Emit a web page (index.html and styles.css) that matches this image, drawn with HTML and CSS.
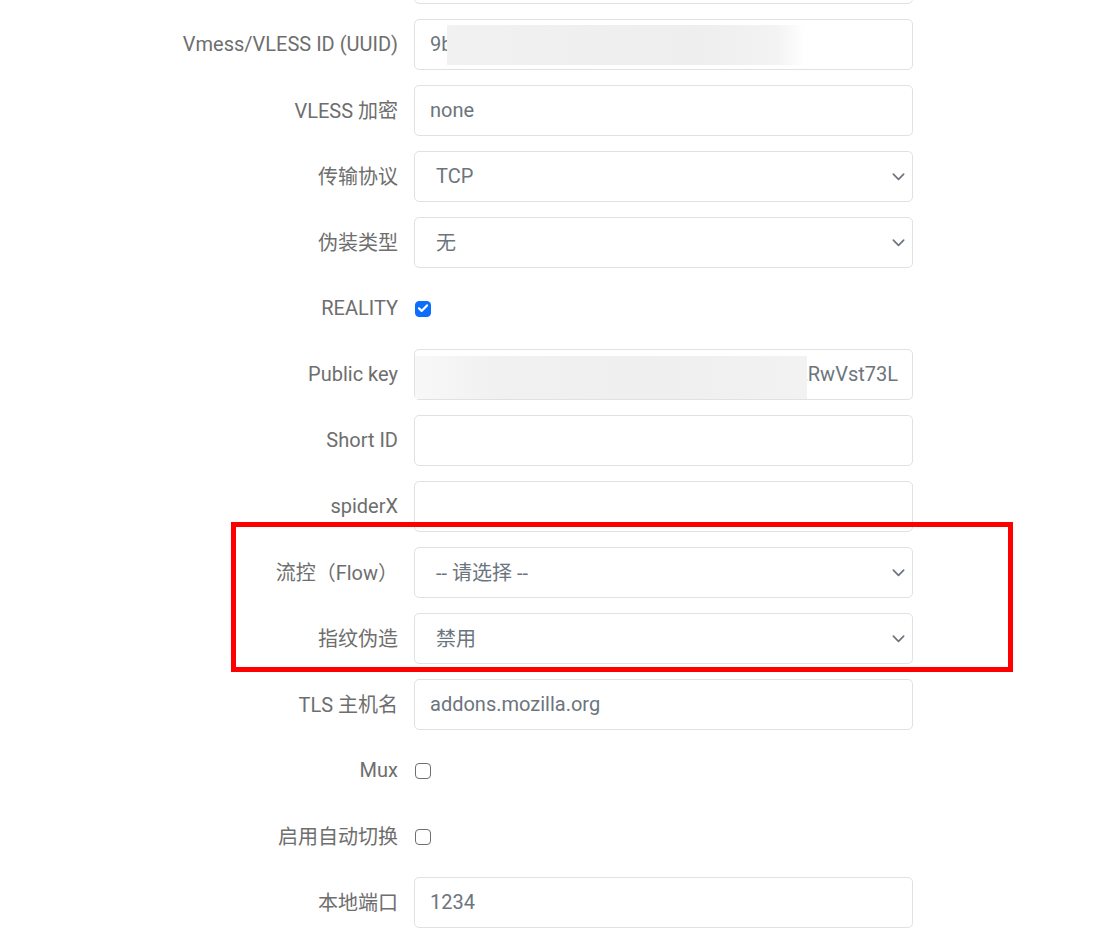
FILE: index.html
```html
<!DOCTYPE html>
<html lang="zh-CN">
<head>
<meta charset="utf-8">
<title>节点设置</title>
<link rel="stylesheet" href="styles.css">
</head>
<body>
<form class="form">
  <div class="row"><label class="lbl"></label><div class="field"><input class="ctl" type="text" value=""></div></div>
  <div class="row"><label class="lbl">Vmess/VLESS ID (UUID)</label><div class="field"><input class="ctl" type="text" value="9b"><span class="blur blur-uuid"></span></div></div>
  <div class="row"><label class="lbl">VLESS 加密</label><div class="field"><input class="ctl" type="text" value="none"></div></div>
  <div class="row"><label class="lbl">传输协议</label><div class="field"><div class="ctl sel">TCP</div></div></div>
  <div class="row"><label class="lbl">伪装类型</label><div class="field"><div class="ctl sel">无</div></div></div>
  <div class="row"><label class="lbl">REALITY</label><div class="field"><span class="cb on"><svg viewBox="0 0 16 16" width="16" height="16"><path d="M4 8.3l2.6 2.6L12 5.4" fill="none" stroke="#fff" stroke-width="2.2" stroke-linecap="round" stroke-linejoin="round"/></svg></span></div></div>
  <div class="row"><label class="lbl">Public key</label><div class="field"><div class="ctl pk">2RwVst73L</div><span class="blur blur-pk"></span></div></div>
  <div class="row"><label class="lbl">Short ID</label><div class="field"><input class="ctl" type="text" value=""></div></div>
  <div class="row"><label class="lbl">spiderX</label><div class="field"><input class="ctl" type="text" value=""></div></div>
  <div class="row"><label class="lbl">流控（Flow）</label><div class="field"><div class="ctl sel">-- 请选择 --</div></div></div>
  <div class="row"><label class="lbl">指纹伪造</label><div class="field"><div class="ctl sel">禁用</div></div></div>
  <div class="row"><label class="lbl">TLS 主机名</label><div class="field"><input class="ctl" type="text" value="addons.mozilla.org"></div></div>
  <div class="row"><label class="lbl">Mux</label><div class="field"><span class="cb"></span></div></div>
  <div class="row"><label class="lbl">启用自动切换</label><div class="field"><span class="cb"></span></div></div>
  <div class="row"><label class="lbl">本地端口</label><div class="field"><input class="ctl" type="text" value="1234"></div></div>
  <div class="mark"></div>
</form>
</body>
</html>
```
FILE: styles.css
```css
* { box-sizing: border-box; }
html, body { margin: 0; padding: 0; background: #fff; }
body {
  font-family: Roboto, "Noto Sans CJK SC", sans-serif;
  font-size: 20px;
  color: #666;
  overflow: hidden;
  height: 947px;
}
.form {
  position: relative;
  margin-top: -47px;
  display: flex;
  flex-direction: column;
  gap: 15px;
}
.row {
  display: grid;
  grid-template-columns: 398px 499px;
  column-gap: 16px;
  height: 51px;
  align-items: center;
}
.lbl {
  text-align: right;
  white-space: nowrap;
  color: #6e6e6e;
  padding-bottom: 2px;
}
.field {
  position: relative;
  height: 51px;
  display: flex;
  align-items: center;
}
.ctl {
  width: 499px;
  height: 51px;
  border: 1px solid #dee2e6;
  border-radius: 5px;
  padding: 0 15px 2px;
  font: inherit;
  color: #6c757d;
  background: #fff;
  display: flex;
  align-items: center;
  outline: none;
  overflow: hidden;
  white-space: nowrap;
}
.sel {
  padding-left: 21px;
  background-image: url("data:image/svg+xml,%3Csvg xmlns='http://www.w3.org/2000/svg' viewBox='0 0 16 16'%3E%3Cpath d='M2.5 5.5l5.5 5.5 5.5-5.5' fill='none' stroke='%236c757d' stroke-width='1.8' stroke-linecap='round' stroke-linejoin='round'/%3E%3C/svg%3E");
  background-repeat: no-repeat;
  background-size: 15px 15px;
  background-position: right 6px center;
}
.pk { justify-content: flex-end; padding-right: 14px; }
.cb {
  width: 16px;
  height: 16px;
  border: 1.5px solid #6f6f6f;
  border-radius: 4px;
  display: block;
  margin-left: 1px;
}
.cb.on {
  background: #0d6efd;
  border-color: #0d6efd;
}
.cb.on svg { display: block; margin: -1.5px; }
.blur {
  position: absolute;
}
.blur-uuid {
  left: 33px;
  top: 6px;
  width: 358px;
  height: 40px;
  background: linear-gradient(90deg, #f1f1f1 0%, #eeeeee 70%, #f3f3f3 92%, rgba(255,255,255,0) 100%);
}
.blur-pk {
  left: 1px;
  top: 7px;
  width: 392px;
  height: 43px;
  background: linear-gradient(90deg, #f8f8f8 0%, #f1f1f1 20%, #efefef 60%, #f2f2f2 100%);
}
.mark {
  position: absolute;
  left: 231px;
  top: 569px;
  width: 782px;
  height: 150px;
  border: 5px solid #ff0000;
  pointer-events: none;
}
```
